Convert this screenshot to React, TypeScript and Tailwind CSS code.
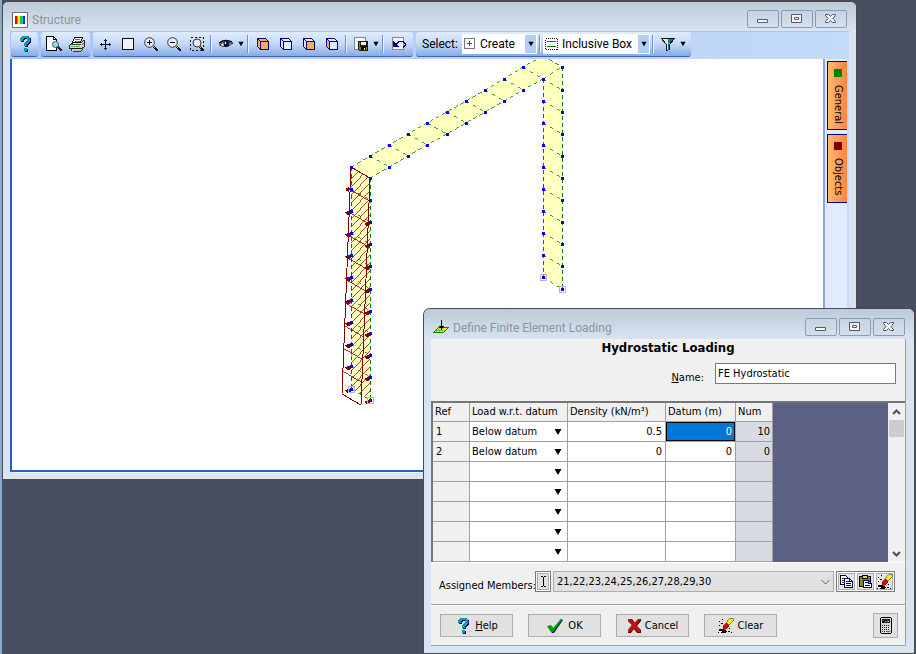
import type { ReactNode } from "react";

const TAHOMA = "font-['DejaVu_Sans_Condensed','DejaVu_Sans',sans-serif]";
const SEGOE = "font-[Roboto,'Noto_Sans',sans-serif]";

/* ---------- icons ---------- */

function Icon({ size = 16, children }: { size?: number; children: ReactNode }) {
  return (
    <svg width={size} height={size} viewBox="0 0 16 16" shapeRendering="crispEdges" fill="none" aria-hidden="true" className="shrink-0">
      {children}
    </svg>
  );
}

function HelpIcon() {
  return (
    <Icon>
      <path d="M4 5V3l2-2h6l2 2v4l-3 2v2H8V8l3-2V4l-1-1H8L7 4v2H4z" fill="#000070" />
      <path d="M3 4V2l2-2h6l2 2v4l-3 2v2H7V7l3-2V3L9 2H7L6 3v2H3z" fill="#00a0a8" />
      <path d="M8 13h3v3H8z" fill="#000070" />
      <path d="M7 12h3v3H7z" fill="#00a0a8" />
    </Icon>
  );
}

function PreviewIcon() {
  return (
    <Icon>
      <path d="M0.500 0.500h7l3 3v11h-10z" fill="#fff" stroke="#000" />
      <path d="M7.500 0.500v3h3" stroke="#000" />
      <circle cx="9.500" cy="8.500" r="3" fill="#7fe6ee" stroke="#555" shapeRendering="auto" />
      <path d="M12 11l4 4" stroke="#222" strokeWidth="2" />
    </Icon>
  );
}

function PrinterIcon() {
  return (
    <Icon>
      <path d="M5.500 1.500h8l-2 5h-8z" fill="#fff" stroke="#000" />
      <path d="M6 3.500h5M5.500 5h5" stroke="#333" strokeWidth="0.700" />
      <path d="M0.500 8.500l3-2h8l2-2h2v5l-3 3h-12z" fill="#d9dccb" stroke="#000" strokeWidth="0.800" />
      <path d="M1 8.500h11l3-3" stroke="#000" strokeWidth="0.700" />
      <path d="M2 10.500h9" stroke="#60b060" />
      <path d="M2.500 12.500h9l2-2v2l-2 2.500h-8z" fill="#c8ccb8" stroke="#111" strokeWidth="0.800" />
    </Icon>
  );
}

function MoveIcon() {
  return (
    <Icon>
      <path d="M8.500 3v11M3 8.500h11M7 4.500h3M7 12.500h3M4.500 7v3M12.500 7v3" stroke="#111" />
    </Icon>
  );
}

function SquareIcon() {
  return (
    <Icon>
      <path d="M2.500 2.500h11v11h-11z" fill="#f4f2ff" stroke="#111" />
    </Icon>
  );
}

function ZoomIcon({ kind }: { kind: "in" | "out" | "area" }) {
  return (
    <Icon>
      {kind === "area" && <path d="M1.500 1.500h13v13h-13z" stroke="#111" strokeDasharray="2 2" />}
      <circle cx={kind === "area" ? 8 : 6.5} cy={kind === "area" ? 7 : 6.5} r={kind === "area" ? 4 : 4.8} fill="#e8ebff" stroke="#333" shapeRendering="auto" />
      {kind !== "area" && <path d="M4 6.500h5" stroke="#111" />}
      {kind === "in" && <path d="M6.500 4v5" stroke="#111" />}
      <path d="M10.500 10.500l4.500 4.500" stroke="#111" strokeWidth="2.200" />
      <path d="M10.500 10.500l2 2" stroke="#d8c020" strokeWidth="1" />
    </Icon>
  );
}

function EyeIcon() {
  return (
    <Icon>
      <g shapeRendering="auto">
        <path d="M1 7.500Q6 2.500 14 6" stroke="#000" strokeWidth="1.400" />
        <path d="M1.500 9Q7 4.500 12 7l3 0Q8 13 1.500 9" fill="#fff" stroke="#000" strokeWidth="0.800" />
        <circle cx="8.500" cy="8" r="3" fill="#000040" />
        <circle cx="7.500" cy="7" r="0.900" fill="#fff" />
      </g>
    </Icon>
  );
}

function CubeIcon({ face }: { face: "all" | "none" | "front" | "side" }) {
  return (
    <Icon>
      <path d="M2.500 2.500h8l3 3v8h-8l-3-3z" fill={face === "all" ? "#ffa860" : "#e2ebfd"} />
      {face === "front" && <path d="M5.500 5.500h8v8h-8z" fill="#ffa860" />}
      {face === "side" && <path d="M2.500 2.500l3 3v8l-3-3z" fill="#ffa860" />}
      <path d="M5.500 5.500h8v8h-8zM2.500 2.500l3 3M2.500 2.500h8l3 3M2.500 2.500v8l3 3" stroke="#000080" />
    </Icon>
  );
}

function SaveIcon() {
  return (
    <Icon>
      <path d="M1.500 1.500h11v12h-11z" fill="#f0f4fc" stroke="#888" />
      <path d="M5 5h10v10H6l-1-1z" fill="#202000" />
      <path d="M6 6h1v5h7V6h0v8H6z" fill="#808000" />
      <path d="M8 6h5v3H8z" fill="#f4f4f4" />
      <path d="M8 11h5v3H8z" fill="#000" />
      <path d="M11 12h1v2h-1z" fill="#fff" />
    </Icon>
  );
}

function UndoIcon() {
  return (
    <Icon>
      <path d="M2.500 1.500h11v12h-11z" fill="#edf2fe" stroke="#888" />
      <path d="M3 5v6h6z" fill="#000080" />
      <path d="M6 8.500l3-3h4l2 2v2l-2 2" stroke="#000080" />
    </Icon>
  );
}

function FilterIcon() {
  return (
    <Icon>
      <path d="M1.500 2.500h13l-5 6v5l-3 1v-6z" fill="#d5eeee" stroke="#111" />
      <path d="M8 3h5L9 8v6H8z" fill="#108080" />
    </Icon>
  );
}

function EraserIcon() {
  return (
    <Icon>
      <path d="M11 1l4-1v3l-4 4-3-2z" fill="#f8ec10" stroke="#444" strokeWidth="0.600" />
      <path d="M8 5l3 3-3 3H5V8z" fill="#e00808" stroke="#700" strokeWidth="0.600" />
      <path d="M1 3h1v1H1zM4 1h1v1H4zM3 5h2v1H3zM1 7h1v1H1zM4 11l3 1 2 1-2 2H3l1-2H1v-2zM0 14h1v1H0zM10 13h2v1h-2zM11 10h1v1h-1zM13 14h1v1h-1z" fill="#000" />
    </Icon>
  );
}

function CopyIcon() {
  return (
    <svg width="15" height="15" viewBox="0 0 15 15" shapeRendering="crispEdges" fill="none" aria-hidden="true">
      <path d="M1.500 1.500h5l2 2v7h-7z" fill="#fff" stroke="#000" />
      <path d="M3 4.500h3M3 6.500h3M3 8.500h3" stroke="#333" />
      <path d="M5.500 4.500h5l3 3v6h-8z" fill="#fff" stroke="#000080" />
      <path d="M7 7.500h3M7 9.500h5M7 11.500h5M10.500 4.500v3h3" stroke="#000080" />
    </svg>
  );
}

function PasteIcon() {
  return (
    <svg width="15" height="15" viewBox="0 0 15 15" shapeRendering="crispEdges" fill="none" aria-hidden="true">
      <path d="M1.500 2.500h11v10h-11z" fill="#8a8420" stroke="#000" />
      <path d="M4.500 1.500h5v3h-5z" fill="#f4e820" stroke="#000" />
      <path d="M5.500 6.500h5l3 3v4h-8z" fill="#fff" stroke="#000080" />
      <path d="M7 8.500h3M7 11.500h5M10.500 6.500v3h3" stroke="#000080" />
    </svg>
  );
}

function TickIcon() {
  return (
    <svg width="18" height="16" viewBox="0 0 18 16" aria-hidden="true">
      <path d="M2 9l4-1 1 3 8-10 2 1L8 15H6z" fill="#001850" />
      <path d="M1 8l4-1 2 3 8-9 1 1-9 12H5z" fill="#00a000" />
    </svg>
  );
}

function CrossIcon() {
  return (
    <svg width="14" height="15" viewBox="0 0 14 15" aria-hidden="true">
      <path d="M1 1h4l3 4 4-4h2v2l-4 5 4 4v3h-4l-3-4-3 4H1v-3l4-5-4-4z" fill="#600000" />
      <path d="M1 1h3l3 4 4-4h2v1L9 7l4 5v2h-2L7 10l-4 4H1v-2l4-5-4-4z" fill="#c01010" />
    </svg>
  );
}

function CalculatorIcon() {
  const rows = [8, 10, 12];
  return (
    <svg width="12" height="17" viewBox="0 0 12 17" shapeRendering="crispEdges" aria-hidden="true">
      <path d="M1.500 0.500h9l1 1v14l-1 1h-9l-1-1v-14z" fill="#d8d8d8" stroke="#000" />
      <path d="M2 2h8v4H2z" fill="#222" />
      <path d="M5 4h1v1H5zM7 4h2v1H7z" fill="#20d8d8" />
      {rows.map((y) => (
        <path key={y} d={`M2 ${y}h1v1H2zM4 ${y}h1v1H4zM6 ${y}h1v1H6zM8 ${y}h1v1H8z`} fill="#222" />
      ))}
      <path d="M2 14h1v1H2zM4 14h1v1H4z" fill="#222" />
      <path d="M6 14h4v1H6z" fill="#e03020" />
    </svg>
  );
}

function SpectrumIcon() {
  return (
    <svg width="16" height="16" viewBox="0 0 16 16" shapeRendering="crispEdges" aria-hidden="true">
      <path d="M0.500 0.500h15v15H0.500z" fill="#fff" stroke="#707070" />
      <path d="M3 4h2v8H3z" fill="#f00000" />
      <path d="M5 4h1v8H5z" fill="#ff9000" />
      <path d="M6 4h2v8H6z" fill="#f8f000" />
      <path d="M8 4h2v8H8z" fill="#10d820" />
      <path d="M10 4h1v8h-1z" fill="#00c8f0" />
      <path d="M11 4h2v8h-2z" fill="#1018d0" />
    </svg>
  );
}

function LoadIcon() {
  return (
    <Icon>
      <path d="M0.500 12.500l5-5h10l-5 5z" fill="#f4f020" stroke="#108010" />
      <path d="M3 10.500h10M6 12l4-4M8 7l-5 5" stroke="#40b010" strokeWidth="0.700" />
      <path d="M8.500 0v10M6 6.500h5M7 7.500h3" stroke="#000" />
    </Icon>
  );
}

function Down({ size = 8 }: { size?: number }) {
  return (
    <svg width={size} height={size} viewBox="0 0 8 8" aria-hidden="true" className="pointer-events-none shrink-0">
      <path d="M0.500 1h7L4 7z" fill="#000" />
    </svg>
  );
}

/* ---------- window frame pieces ---------- */

function CaptionButtons() {
  const kinds = ["Minimize", "Restore", "Close"];
  return (
    <div className="flex gap-0.5">
      {kinds.map((k) => (
        <button key={k} aria-label={k} className="flex h-[18px] w-8 items-center justify-center rounded-[2px] border border-[#8b9bb4] bg-gradient-to-b from-[#c6d3e2] to-[#d3dfec]">
          <svg width="14" height="12" viewBox="0 0 14 12" aria-hidden="true">
            {k === "Minimize" && <path d="M1.500 6.500h10v3h-10z" fill="#f4f4f4" stroke="#5c5f68" />}
            {k === "Restore" && <path d="M1.500 1.500h10v8h-10zM4.500 4.500h4v2h-4z" fill="#f4f4f4" stroke="#55586c" />}
            {k === "Close" && <path d="M1.500 1.500h3l2 2 2-2h3v1L9 5.500l2.500 3v1h-3l-2-2-2 2h-3v-1l2.500-3-2.500-3z" fill="#f4f4f4" stroke="#55586c" />}
          </svg>
        </button>
      ))}
    </div>
  );
}

function ToolButton({ label, children }: { label: string; children: ReactNode }) {
  return (
    <button aria-label={label} title={label} className="flex h-6 w-[23px] shrink-0 items-center justify-center">
      {children}
    </button>
  );
}

function MoreButton({ label }: { label: string }) {
  return (
    <button aria-label={label} className="flex h-6 w-2 shrink-0 items-center justify-center">
      <Down size={6} />
    </button>
  );
}

function Sep() {
  return <span className="mx-0.5 h-[18px] w-0.5 shrink-0 border-l border-r border-l-[#6e8fcb] border-r-[#eef4ff]" />;
}

function Group({ children, className = "" }: { children: ReactNode; className?: string }) {
  return (
    <div className={`flex h-[25px] shrink-0 items-center rounded-[3px] border-b border-[#3f66ad] bg-gradient-to-b from-[#e1ecff] via-[#c4d9f8] to-[#86abe4] ${className}`}>
      {children}
    </div>
  );
}

function ToolSelect({ label, value, icon, className }: { label: string; value: string; icon: ReactNode; className: string }) {
  return (
    <div className={`relative flex h-5 shrink-0 items-center bg-white pl-0.5 ${className}`}>
      {icon}
      <select aria-label={label} className="h-5 w-full appearance-none pl-1 text-xs outline-none">
        <option>{value}</option>
      </select>
      <span className="pointer-events-none absolute top-px right-px flex h-[18px] w-[11px] items-center justify-center bg-[#b4cdf3]">
        <Down size={6} />
      </span>
    </div>
  );
}

function Toolbar() {
  return (
    <div className={`flex h-7 gap-[3px] overflow-hidden border-t border-[#a9c4ee] bg-gradient-to-r from-[#a9c6f5] to-[#c4daf9] pl-px text-xs text-black ${SEGOE}`}>
      <Group className="w-[27px] justify-center">
        <ToolButton label="Help"><HelpIcon /></ToolButton>
      </Group>
      <Group className="w-[49px] justify-center">
        <ToolButton label="Preview"><PreviewIcon /></ToolButton>
        <ToolButton label="Print"><PrinterIcon /></ToolButton>
      </Group>
      <Group className="w-[320px]">
        <ToolButton label="Pan"><MoveIcon /></ToolButton>
        <ToolButton label="Full view"><SquareIcon /></ToolButton>
        <ToolButton label="Zoom in"><ZoomIcon kind="in" /></ToolButton>
        <ToolButton label="Zoom out"><ZoomIcon kind="out" /></ToolButton>
        <ToolButton label="Zoom area"><ZoomIcon kind="area" /></ToolButton>
        <Sep />
        <ToolButton label="View"><EyeIcon /></ToolButton>
        <MoreButton label="View options" />
        <Sep />
        <ToolButton label="Solid"><CubeIcon face="all" /></ToolButton>
        <ToolButton label="Wire"><CubeIcon face="none" /></ToolButton>
        <ToolButton label="Front"><CubeIcon face="front" /></ToolButton>
        <ToolButton label="Side"><CubeIcon face="side" /></ToolButton>
        <Sep />
        <ToolButton label="Save"><SaveIcon /></ToolButton>
        <MoreButton label="Save options" />
        <Sep />
        <ToolButton label="Undo"><UndoIcon /></ToolButton>
      </Group>
      <Group className="pr-1 pl-1.5">
        <span className="w-10">Select:</span>
        <ToolSelect
          label="Select mode"
          value="Create"
          className="w-[75px]"
          icon={
            <svg width="12" height="12" viewBox="0 0 12 12" shapeRendering="crispEdges" fill="none" aria-hidden="true" className="shrink-0">
              <path d="M0.500 0.500h10v10h-10z" fill="#fff" stroke="#777" />
              <path d="M5.500 3v5M3 5.500h5" stroke="#008000" />
            </svg>
          }
        />
        <Sep />
        <ToolSelect
          label="Selection shape"
          value="Inclusive Box"
          className="w-[107px]"
          icon={
            <svg width="13" height="12" viewBox="0 0 13 12" shapeRendering="crispEdges" aria-hidden="true" className="shrink-0">
              <path d="M0.500 0.500h12v11H0.500z" fill="none" stroke="#000" strokeDasharray="1 1" />
              <path d="M2 3.500h9M2 8.500h9" stroke="#008000" />
            </svg>
          }
        />
        <Sep />
        <ToolButton label="Filter"><FilterIcon /></ToolButton>
        <MoreButton label="Filter options" />
      </Group>
    </div>
  );
}

/* ---------- structure drawing ---------- */

type Pt = [number, number];

const roofTop: Pt[] = [[351, 167], [370, 156], [389, 145], [408, 134], [427, 123], [447, 112], [466, 101], [485, 90], [504, 79], [523, 67], [543, 56]];
const roofLow: Pt[] = [[370, 178], [389, 167], [408, 156], [427, 145], [447, 134], [466, 123], [485, 112], [504, 101], [523, 90], [543, 79]];
const postInner: Pt[] = [79, 101, 123, 145, 167, 189, 211, 233, 255, 277].map((y) => [543, y]);
const postOuter: Pt[] = [67, 90, 112, 134, 156, 178, 200, 222, 244, 266, 289].map((y) => [562, y]);
const wallLeft: Pt[] = [167, 189, 211, 233, 255, 277, 300, 322, 344, 366, 389].map((y) => [351, y]);
const wallRight: Pt[] = [178, 200, 222, 244, 266, 289, 311, 333, 355, 377, 400].map((y) => [370, y]);
const line = (pts: Pt[]) => pts.map((p) => p.join(",")).join(" ");
const ribs: [Pt, Pt][] = [
  ...roofLow.map((p, i): [Pt, Pt] => [roofTop[i], p]),
  ...postInner.map((p, i): [Pt, Pt] => [p, postOuter[i + 1]]),
  ...wallLeft.map((p, i): [Pt, Pt] => [p, wallRight[i]]),
  [[543, 79], [562, 67]],
];
const supports: Pt[] = [[351, 389], [370, 400], [543, 277], [562, 289]];
const hatch = Array.from({ length: 31 }, (_, i) => 170 + i * 8);
const steps = [1, 2, 3, 4, 5, 6, 7, 8, 9];

function StructureDrawing() {
  return (
    <svg width="811" height="411" viewBox="12 59 811 411" shapeRendering="crispEdges" fill="none" role="img" aria-label="Portal frame with hydrostatic load" className="block shrink-0">
      <defs>
        <clipPath id="wall"><polygon points="351,167 370,178 370,400 351,389" /></clipPath>
      </defs>
      <g fill="#ffffc0">
        <polygon points={line([...roofTop, [562, 67], [562, 289], [543, 277], [543, 79], ...[...roofLow].reverse()])} />
        <polygon points="351,167 370,178 370,400 351,389" />
      </g>
      <g stroke="#008000" strokeDasharray="4 3">
        <polyline points={line(roofTop)} strokeWidth="0.750" />
        <polyline points={line(roofLow)} strokeWidth="0.750" />
        <polyline points={line([[543, 56], [562, 67]])} strokeWidth="0.750" />
        <polyline points={line(postOuter)} />
        <polyline points={line(postInner)} />
        <polyline points={line(wallLeft)} />
        <polyline points={line(wallRight)} />
        <g strokeWidth="0.750" strokeDasharray="4 4">
          {ribs.map(([a, b], i) => (
            <line key={i} x1={a[0]} y1={a[1]} x2={b[0]} y2={b[1]} />
          ))}
        </g>
      </g>
      <g stroke="#800000">
        <g clipPath="url(#wall)" strokeWidth="0.700">
          {hatch.map((y) => (
            <line key={y} x1="350" y1={y + 10} x2="371" y2={y - 12} />
          ))}
        </g>
        <polyline points="351,167 342,394 361,405 370,178 351,167" />
        <g strokeWidth="0.800">
          {steps.map((k) => (
            <line key={k} x1={351 - k * 0.9} y1={167 + k * 22.7} x2={370 - k * 0.9} y2={178 + k * 22.7} />
          ))}
        </g>
      </g>
      <g fill="#800000">
        <path d="M346 188h2v-1h1v1h2v2h-2v2h-1v-1h-2z" />
        {wallLeft.slice(2).map(([x, y]) => (
          <path key={y} d={`M${x - 6} ${y + 1}L${x + 1} ${y - 1}v2l-3 3h-2z`} />
        ))}
        {wallRight.slice(2).map(([x, y]) => (
          <path key={y} d={`M${x - 5} ${y + 1}l6-2v2l-3 3h-2z`} />
        ))}
      </g>
      <g fill="#0000ff">
        {[...roofTop.slice(0, 10), ...roofLow, ...postInner, ...postOuter, ...wallLeft, ...wallRight].map(([x, y], i) => (
          <rect key={i} x={x - 1} y={y - 1} width="3" height="3" />
        ))}
      </g>
      <g stroke="#b8b8b8">
        {supports.map(([x, y]) => (
          <rect key={y} x={x - 2.5} y={y - 2.5} width="6" height="6" />
        ))}
      </g>
    </svg>
  );
}

function SideTab({ label, swatch }: { label: string; swatch: string }) {
  return (
    <button className="flex h-[69px] w-5 flex-col items-center border border-r-0 border-[#000080] bg-gradient-to-r from-[#ffb870] to-[#ff8440] pt-[7px]">
      <span className={`h-2 w-2 shrink-0 ${swatch}`} />
      <span className={`mt-2 text-[11px] leading-4 text-black [writing-mode:vertical-rl] ${TAHOMA}`}>{label}</span>
    </button>
  );
}

function StructureWindow() {
  return (
    <section className="absolute top-0 right-[59px] left-0.5 flex h-[480px] flex-col rounded-t-[7px] border border-t-2 border-[#4b4b4f] bg-[#dae5f0] pr-[7px] pb-1.5 pl-[7px]">
      <header className="-mr-[7px] -ml-[7px] flex h-[29px] shrink-0 items-center justify-between rounded-t-[5px] bg-gradient-to-b from-[#bccbd9] to-[#d8e4f0] pr-[9px] pl-[9px]">
        <h1 className={`flex items-center gap-1 pt-1.5 text-xs text-[#8e959d] ${SEGOE}`}>
          <SpectrumIcon />
          Structure
        </h1>
        <div className="pt-1"><CaptionButtons /></div>
      </header>
      <Toolbar />
      <div className="flex min-h-0 flex-1 border-b border-[#eaf2fc] bg-[#c3daf9] pr-0.5">
        <main className="flex min-w-0 flex-1 overflow-hidden border-r-2 border-b-2 border-l-2 border-[#2a5cc8] border-r-[#80a8ea] bg-white">
          <StructureDrawing />
        </main>
        <nav aria-label="Panels" className="flex w-[22px] flex-col items-end gap-1 bg-[#dfebff] pt-0.5">
          <SideTab label="General" swatch="bg-[#008000]" />
          <SideTab label="Objects" swatch="bg-[#800000]" />
        </nav>
      </div>
    </section>
  );
}

/* ---------- loading dialog ---------- */

const loads = [
  { ref: "1", type: "Below datum", density: "0.5", datum: "0", num: "10" },
  { ref: "2", type: "Below datum", density: "0", datum: "0", num: "0" },
  ...Array.from({ length: 5 }, () => ({ ref: "", type: "", density: "", datum: "", num: "" })),
];

function LoadTable() {
  const cell = "border-r border-b border-[#a0a0a0] p-0";
  const field = "block h-[19px] w-full bg-transparent px-[3px] text-right outline-none";
  return (
    <div className="flex h-[161px] overflow-hidden border-t-2 border-l-2 border-[#767676] bg-[#5a6182]">
      <table className="w-[340px] table-fixed border-separate border-spacing-0 text-[11px] leading-[14px]">
        <colgroup>
          <col className="w-[37px]" />
          <col className="w-[98px]" />
          <col className="w-[98px]" />
          <col className="w-[70px]" />
          <col className="w-[37px]" />
        </colgroup>
        <thead>
          <tr className="h-[19px] bg-[#f0f0f0] text-left">
            {["Ref", "Load w.r.t. datum", "Density (kN/m³)", "Datum (m)", "Num"].map((h) => (
              <th key={h} scope="col" className="border-r border-b border-[#a0a0a0] p-0 pl-0.5 font-normal whitespace-nowrap">{h}</th>
            ))}
          </tr>
        </thead>
        <tbody>
          {loads.map((r, i) => (
            <tr key={i} className="h-5 bg-white">
              <th scope="row" className={`bg-[#f0f0f0] text-left font-normal ${cell}`}><span className="pl-[3px]">{r.ref}</span></th>
              <td className={cell}>
                <div className="flex h-[19px] items-center pr-[5px]">
                  <select aria-label={`Load type, row ${i + 1}`} className="h-[19px] min-w-0 flex-1 appearance-none pl-0.5 outline-none">
                    <option>{r.type}</option>
                  </select>
                  <Down />
                </div>
              </td>
              <td className={cell}><input aria-label={`Density, row ${i + 1}`} defaultValue={r.density} className={field} /></td>
              <td className={cell}>
                <input aria-label={`Datum, row ${i + 1}`} defaultValue={r.datum} className={i === 0 ? "block h-[19px] w-full border border-black bg-[#0078d7] px-0.5 text-right text-white outline-none" : field} />
              </td>
              <td className={`bg-[#d8dbe5] text-right ${cell}`}><span className="pr-0.5">{r.num}</span></td>
            </tr>
          ))}
        </tbody>
      </table>
      <div className="ml-auto flex w-[17px] flex-col items-center bg-[#f0f0f0]">
        <button aria-label="Scroll up" className="flex h-[17px] w-full items-center justify-center">
          <svg width="9" height="6" viewBox="0 0 9 6" aria-hidden="true"><path d="M1 5l3.500-3.500L8 5" fill="none" stroke="#505050" strokeWidth="2" /></svg>
        </button>
        <div className="h-[17px] w-[15px] bg-[#cdcdcd]" />
        <button aria-label="Scroll down" className="mt-auto flex h-[17px] w-full items-center justify-center">
          <svg width="9" height="6" viewBox="0 0 9 6" aria-hidden="true"><path d="M1 1l3.500 3.500L8 1" fill="none" stroke="#505050" strokeWidth="2" /></svg>
        </button>
      </div>
    </div>
  );
}

function DialogButton({ icon, children }: { icon: ReactNode; children: ReactNode }) {
  return (
    <button className="flex h-[23px] w-[73px] items-center justify-center gap-1 border border-[#adadad] bg-[#e1e1e1]">
      {icon}
      <span>{children}</span>
    </button>
  );
}

function LoadingDialog() {
  const mini = "flex h-[17px] w-[17px] items-center justify-center border border-[#adadad] bg-[#e4e4e4]";
  return (
    <section className="absolute top-[308px] right-0 bottom-0 left-[423px] flex flex-col rounded-t-[7px] border border-r-2 border-[#4b4b4f] bg-[#d7e4f2] pr-2 pb-[7px] pl-[7px]">
      <header className="-mr-2 -ml-[7px] flex h-[30px] shrink-0 items-center justify-between rounded-t-[6px] bg-gradient-to-b from-[#bccbd9] to-[#d8e4f0] pr-[9px] pl-[9px]">
        <h2 className={`flex items-center gap-1 pt-2 text-xs text-[#8e959d] ${SEGOE}`}>
          <LoadIcon />
          Define Finite Element Loading
        </h2>
        <div className="pt-1.5"><CaptionButtons /></div>
      </header>
      <div className={`flex-1 border-r border-b border-[#a0a0a0] bg-[#f0f0f0] text-[11px] leading-[14px] text-black ${TAHOMA}`}>
        <h3 className="text-center text-[13px] leading-[18px] font-bold">Hydrostatic Loading</h3>
        <div className="flex items-start justify-end pt-1.5 pr-[9px] pb-4">
          <label htmlFor="load-name" className="mt-2 mr-[11px]"><u>N</u>ame:</label>
          <input id="load-name" defaultValue="FE Hydrostatic" className="h-[21px] w-[181px] border border-[#7a7a7a] bg-white px-0.5 outline-none" />
        </div>
        <LoadTable />
        <div className="flex h-[43px] items-start border-t border-b border-t-white border-b-[#a0a0a0] pt-2 pr-[10px] pl-2">
          <label htmlFor="members" className="mt-2 w-24 whitespace-nowrap">Assigned Members:</label>
          <button aria-label="Pick members" className="mr-0.5 flex h-[21px] w-4 shrink-0 items-center justify-center border border-[#7a7a7a] bg-[#e1e1e1] shadow-[inset_0_0_0_1px_#fff,inset_0_0_0_2px_#adadad]">
            <svg width="7" height="11" viewBox="0 0 7 11" shapeRendering="crispEdges" aria-hidden="true"><path d="M1 0.500h2M4 0.500h2M3.500 1v9M1 10.500h2M4 10.500h2" stroke="#000" /></svg>
          </button>
          <div className="relative min-w-0 flex-1">
            <select id="members" className="block h-[21px] w-full appearance-none border border-[#adadad] bg-[#e1e1e1] pl-[3px] outline-none">
              <option>21,22,23,24,25,26,27,28,29,30</option>
            </select>
            <svg width="9" height="6" viewBox="0 0 9 6" aria-hidden="true" className="pointer-events-none absolute top-2 right-1"><path d="M0.500 1l4 4 4-4" fill="none" stroke="#606060" /></svg>
          </div>
          <div className="ml-0.5 flex h-[21px] w-[59px] shrink-0 items-center justify-between border border-[#7a7a7a] bg-white px-px">
            <button aria-label="Copy" className={mini}><CopyIcon /></button>
            <button aria-label="Paste" className={mini}><PasteIcon /></button>
            <button aria-label="Clear members" className={mini}><EraserIcon /></button>
          </div>
        </div>
        <div className="flex items-center gap-[15px] border-t border-white pt-[7px] pr-[7px] pl-[9px]">
          <DialogButton icon={<HelpIcon />}><u>H</u>elp</DialogButton>
          <DialogButton icon={<TickIcon />}>OK</DialogButton>
          <DialogButton icon={<CrossIcon />}>Cancel</DialogButton>
          <DialogButton icon={<EraserIcon />}>Clear</DialogButton>
          <button aria-label="Calculator" className="ml-auto flex h-[25px] w-[25px] items-center justify-center border border-[#adadad] bg-[#e1e1e1]">
            <CalculatorIcon />
          </button>
        </div>
      </div>
    </section>
  );
}

export default function App() {
  return (
    <div className="relative h-screen min-h-[654px] overflow-hidden border-l-2 border-[#8fa9cc] bg-[#474f60]">
      <div className="absolute inset-y-0 -left-0.5 right-0">
        <StructureWindow />
        <LoadingDialog />
      </div>
    </div>
  );
}
